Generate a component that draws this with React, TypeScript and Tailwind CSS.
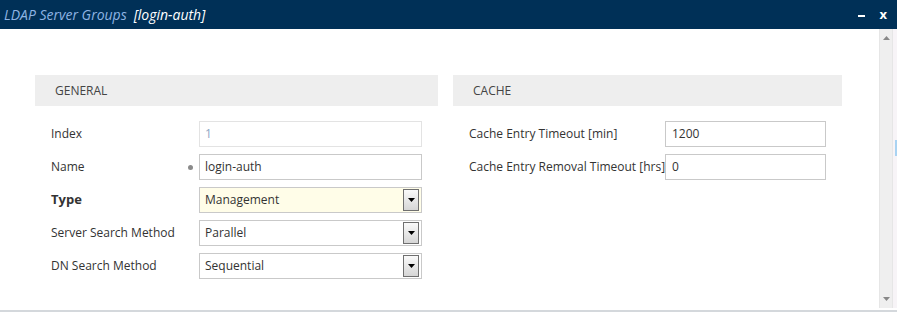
import React from 'react';

const font = { fontFamily: '"Open Sans", "Noto Sans", sans-serif' };

function TextBox({ value, muted }: { value: string; muted?: boolean }) {
  return (
    <div
      className={`flex h-[26px] w-[223px] items-center border px-[5px] text-[12px] ${
        muted ? 'border-[#e3e3e3] text-[#8ea6c4]' : 'border-[#c9c9c9] text-[#333]'
      }`}
    >
      {value}
    </div>
  );
}

function SelectBox({ value, highlight }: { value: string; highlight?: boolean }) {
  return (
    <div
      className={`flex h-[26px] w-[223px] items-center justify-between border border-[#c9c9c9] pl-[5px] pr-[2px] text-[12px] text-[#333] ${
        highlight ? 'bg-[#fffde8]' : 'bg-white'
      }`}
    >
      <span>{value}</span>
      <span className="flex h-[22px] w-[16px] items-center justify-center border border-[#6f6f6f] bg-gradient-to-b from-[#fafafa] to-[#d6d6d6]">
        <svg width="7" height="4" viewBox="0 0 7 4">
          <path d="M0 0h7L3.5 4z" fill="#000" />
        </svg>
      </span>
    </div>
  );
}

function Row({
  label,
  bold,
  dot,
  labelWidth,
  children,
}: {
  label: string;
  bold?: boolean;
  dot?: boolean;
  labelWidth: string;
  children: React.ReactNode;
}) {
  return (
    <div className="flex h-[26px] items-center">
      <div
        className={`flex ${labelWidth} items-center justify-between whitespace-nowrap pl-[16px] pr-[6px] text-[12px] text-[#333]`}
      >
        <span className={bold ? 'text-[13px] font-bold' : ''}>{label}</span>
        {dot && <span className="h-[5px] w-[5px] rounded-full bg-[#8a8a8a]" />}
      </div>
      {children}
    </div>
  );
}

function Header({ title }: { title: string }) {
  return (
    <div className="flex h-[31px] items-center bg-[#eeeeee] pl-[20px] text-[12px] text-[#444]">{title}</div>
  );
}

export default function App() {
  return (
    <div className="flex h-[317px] w-[897px] flex-col bg-white" style={font}>
      <div className="flex h-[29px] items-center justify-between bg-[#003057] pl-[4px] pr-[10px]">
        <div className="flex items-center gap-[7px] text-[14px] italic">
          <span className="text-[#8eb4e3]">LDAP Server Groups</span>
          <span className="text-white">[login-auth]</span>
        </div>
        <div className="flex items-center gap-[14px] text-[13px] font-bold text-white">
          <span className="mt-[2px] h-[2px] w-[7px] bg-white" />
          <span className="leading-none">x</span>
        </div>
      </div>

      <div className="flex flex-1">
        <div className="flex flex-1 gap-[15px] pl-[35px] pt-[46px]">
          <div className="flex w-[403px] flex-col">
            <Header title="GENERAL" />
            <div className="mt-[15px] flex flex-col gap-[7px]">
              <Row label="Index" labelWidth="w-[164px]">
                <TextBox value="1" muted />
              </Row>
              <Row label="Name" dot labelWidth="w-[164px]">
                <TextBox value="login-auth" />
              </Row>
              <Row label="Type" bold labelWidth="w-[164px]">
                <SelectBox value="Management" highlight />
              </Row>
              <Row label="Server Search Method" labelWidth="w-[164px]">
                <SelectBox value="Parallel" />
              </Row>
              <Row label="DN Search Method" labelWidth="w-[164px]">
                <SelectBox value="Sequential" />
              </Row>
            </div>
          </div>
          <div className="flex w-[389px] flex-col">
            <Header title="CACHE" />
            <div className="mt-[15px] flex flex-col gap-[7px]">
              <Row label="Cache Entry Timeout [min]" labelWidth="w-[212px]">
                <div className="flex h-[26px] w-[161px] items-center border border-[#c9c9c9] px-[6px] text-[12px] text-[#333]">
                  1200
                </div>
              </Row>
              <Row label="Cache Entry Removal Timeout [hrs]" labelWidth="w-[212px]">
                <div className="flex h-[26px] w-[161px] items-center border border-[#c9c9c9] px-[6px] text-[12px] text-[#333]">
                  0
                </div>
              </Row>
            </div>
          </div>
        </div>
        <div className="flex w-[18px] pb-[2px]">
          <div className="flex w-[14px] flex-col items-center justify-between border-x border-[#e6e6e6] bg-[#efefef] py-[7px]">
            <svg width="7" height="4" viewBox="0 0 7 4">
              <path d="M0 4h7L3.5 0z" fill="#888" />
            </svg>
            <svg width="7" height="4" viewBox="0 0 7 4">
              <path d="M0 0h7L3.5 4z" fill="#888" />
            </svg>
          </div>
          <div className="flex w-[4px] flex-col bg-[#f7f4f7] pt-[111px]">
            <div className="ml-[2px] h-[16px] w-[2px] bg-[#a9d3f2]" />
          </div>
        </div>
      </div>
      <div className="h-[2px] bg-[#d4d8dc]" />
      <div className="h-[5px] bg-white" />
    </div>
  );
}
